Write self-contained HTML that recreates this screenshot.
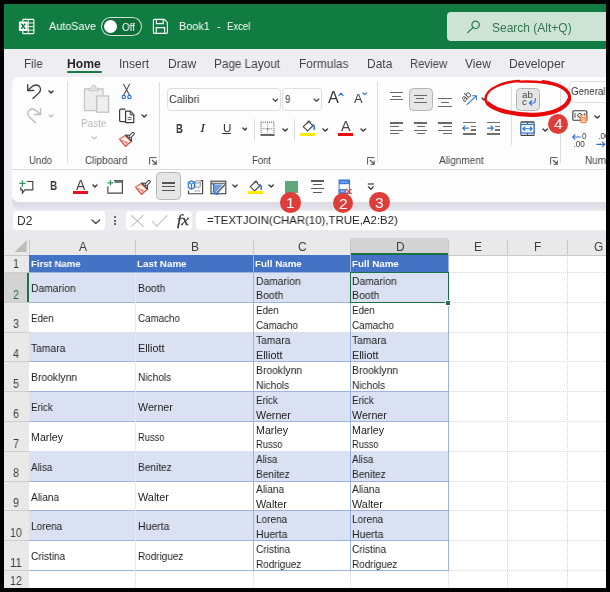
<!DOCTYPE html><html><head><meta charset="utf-8"><title>Excel</title><style>

html,body{margin:0;padding:0;}
body{width:610px;height:592px;overflow:hidden;background:#000;position:relative;font-family:"Liberation Sans",sans-serif;}
#w{position:absolute;left:4px;top:4px;width:601.5px;height:583.5px;overflow:hidden;background:#fff;}
#w div,#w span,#w svg{position:absolute;}
.t{white-space:nowrap;line-height:1;transform-origin:0 50%;display:block;will-change:transform;}

</style></head><body><div id="w">
<div style="left:0.00px;top:0.00px;width:602.00px;height:45.20px;background:#107c41;"></div>
<div style="left:0.00px;top:45.00px;width:602.00px;height:30.00px;background:#eeeef2;"></div>
<div style="left:0.00px;top:73.00px;width:602.00px;height:126.00px;background:#eeeef2;"></div>
<div style="left:0.00px;top:198.00px;width:602.00px;height:36.00px;background:#ebebf0;"></div>
<div style="left:7.50px;top:195.00px;width:595.00px;height:11.20px;background:transparent;background-image:linear-gradient(to bottom,#dadbe3 0,#dddee6 60%,#e2e3e9 85%,#e9e9ee 100%);border-radius:0 0 0 9px;"></div>
<div style="left:0.00px;top:226.50px;width:602.00px;height:7.00px;background:#e7e7ec;"></div>
<div style="left:0.00px;top:233.50px;width:602.00px;height:351.00px;background:#fff;"></div>
<div style="left:8.00px;top:73.30px;width:594.00px;height:125.00px;background:#fdfdfd;border-radius:7px 0 0 7px;"></div>
<div style="left:8.00px;top:165.00px;width:594.00px;height:1.00px;background:#dcdcdc;"></div>
<span class="t" style="left:44.70px;top:17.30px;font-size:11.1px;color:#fff;transform:scaleX(0.9749);">AutoSave</span>
<div style="left:97px;top:12.9px;width:38.7px;height:17.2px;border:1px solid rgba(255,255,255,0.8);border-radius:9.7px;background:#0e6e3a;"></div>
<div style="left:100.3px;top:15.9px;width:12.9px;height:12.9px;border-radius:50%;background:#fff;"></div>
<span class="t" style="left:118.20px;top:17.63px;font-size:10.6px;color:#fff;transform:scaleX(0.9327);">Off</span>
<span class="t" style="left:174.60px;top:17.30px;font-size:11.1px;color:#fff;transform:scaleX(0.9787);">Book1</span>
<span class="t" style="left:212.70px;top:17.30px;font-size:11.1px;color:#fff;transform:scaleX(0.8911);">-</span>
<span class="t" style="left:222.80px;top:17.30px;font-size:11.1px;color:#fff;transform:scaleX(0.8585);">Excel</span>
<div style="left:443.00px;top:7.80px;width:160.00px;height:29.40px;background:#cde3d5;border-radius:4px 0 0 4px;"></div>
<span class="t" style="left:488.00px;top:17.84px;font-size:12px;color:#33774f;">Search (Alt+Q)</span>
<span class="t" style="left:20.10px;top:53.54px;font-size:12px;color:#444;transform:scaleX(0.9667);">File</span>
<span class="t" style="left:114.80px;top:53.54px;font-size:12px;color:#444;">Insert</span>
<span class="t" style="left:163.70px;top:53.54px;font-size:12px;color:#444;transform:scaleX(1.0066);">Draw</span>
<span class="t" style="left:209.90px;top:53.54px;font-size:12px;color:#444;transform:scaleX(0.9794);">Page Layout</span>
<span class="t" style="left:295.20px;top:53.54px;font-size:12px;color:#444;transform:scaleX(0.9897);">Formulas</span>
<span class="t" style="left:362.70px;top:53.54px;font-size:12px;color:#444;">Data</span>
<span class="t" style="left:406.00px;top:53.54px;font-size:12px;color:#444;transform:scaleX(0.9426);">Review</span>
<span class="t" style="left:461.10px;top:53.54px;font-size:12px;color:#444;">View</span>
<span class="t" style="left:505.30px;top:53.54px;font-size:12px;color:#444;transform:scaleX(1.0201);">Developer</span>
<span class="t" style="left:62.90px;top:53.54px;font-size:12px;color:#262626;font-weight:700;transform:scaleX(1.0137);">Home</span>
<div style="left:62.90px;top:67.00px;width:34.70px;height:2.40px;background:#1a7a45;border-radius:1.2px;"></div>
<span class="t" style="left:25.40px;top:151.11px;font-size:10.5px;color:#444;transform:scaleX(0.9200);">Undo</span>
<span class="t" style="left:81.00px;top:151.11px;font-size:10.5px;color:#444;transform:scaleX(0.9454);">Clipboard</span>
<span class="t" style="left:247.80px;top:151.11px;font-size:10.5px;color:#444;transform:scaleX(0.8993);">Font</span>
<span class="t" style="left:435.00px;top:151.11px;font-size:10.5px;color:#444;transform:scaleX(0.9593);">Alignment</span>
<span class="t" style="left:581.20px;top:151.11px;font-size:10.5px;color:#444;transform:scaleX(0.9471);">Num</span>
<div style="left:63.00px;top:78.00px;width:1.00px;height:81.00px;background:#dcdce2;"></div>
<div style="left:155.10px;top:78.00px;width:1.00px;height:81.00px;background:#dcdce2;"></div>
<div style="left:373.10px;top:78.00px;width:1.00px;height:81.00px;background:#dcdce2;"></div>
<div style="left:555.70px;top:78.00px;width:1.00px;height:81.00px;background:#dcdce2;"></div>
<div style="left:9.10px;top:206.80px;width:91.80px;height:19.70px;background:#fff;border-radius:4px;"></div>
<span class="t" style="left:12.60px;top:210.64px;font-size:12px;color:#333;">D2</span>
<div style="left:121.60px;top:206.80px;width:66.90px;height:19.70px;background:#fff;border-radius:4px;"></div>
<div style="left:192.00px;top:206.80px;width:412.00px;height:19.70px;background:#fff;border-radius:4px 0 0 4px;"></div>
<span class="t" style="left:203.20px;top:210.87px;font-size:11.5px;color:#222;transform:scaleX(0.9936);">=TEXTJOIN(CHAR(10),TRUE,A2:B2)</span>
<span class="t" style="left:172.60px;top:208.08px;font-size:15.5px;color:#333;font-family:'Liberation Serif',serif;font-style:italic;-webkit-text-stroke:0.28px #333;transform:scaleX(1.0726);">fx</span>
<div style="left:0.00px;top:233.50px;width:602.00px;height:17.50px;background:#e9e9e9;"></div>
<div style="left:0.00px;top:233.50px;width:25.00px;height:351.00px;background:#e9e9e9;"></div>
<div style="left:346.30px;top:233.50px;width:98.20px;height:17.50px;background:#d3d3d3;"></div>
<div style="left:346.30px;top:249.20px;width:98.20px;height:1.80px;background:#1e7145;"></div>
<div style="left:0.00px;top:268.50px;width:25.00px;height:29.80px;background:#d3d3d3;"></div>
<div style="left:23.40px;top:268.50px;width:1.80px;height:29.80px;background:#1e7145;"></div>
<div style="left:24.50px;top:236.00px;width:1.00px;height:15.00px;background:#c8c8c8;"></div>
<div style="left:131.10px;top:236.00px;width:1.00px;height:15.00px;background:#c8c8c8;"></div>
<div style="left:249.10px;top:236.00px;width:1.00px;height:15.00px;background:#c8c8c8;"></div>
<div style="left:345.80px;top:236.00px;width:1.00px;height:15.00px;background:#c8c8c8;"></div>
<div style="left:444.00px;top:236.00px;width:1.00px;height:15.00px;background:#c8c8c8;"></div>
<div style="left:503.00px;top:236.00px;width:1.00px;height:15.00px;background:#c8c8c8;"></div>
<div style="left:562.90px;top:236.00px;width:1.00px;height:15.00px;background:#c8c8c8;"></div>
<div style="left:0.00px;top:250.60px;width:602.00px;height:0.90px;background:#c9c9c9;"></div>
<div style="left:0.00px;top:268.00px;width:25.00px;height:1.00px;background:#cfcfcf;"></div>
<div style="left:0.00px;top:297.80px;width:25.00px;height:1.00px;background:#cfcfcf;"></div>
<div style="left:0.00px;top:327.60px;width:25.00px;height:1.00px;background:#cfcfcf;"></div>
<div style="left:0.00px;top:357.40px;width:25.00px;height:1.00px;background:#cfcfcf;"></div>
<div style="left:0.00px;top:387.20px;width:25.00px;height:1.00px;background:#cfcfcf;"></div>
<div style="left:0.00px;top:417.00px;width:25.00px;height:1.00px;background:#cfcfcf;"></div>
<div style="left:0.00px;top:446.80px;width:25.00px;height:1.00px;background:#cfcfcf;"></div>
<div style="left:0.00px;top:476.60px;width:25.00px;height:1.00px;background:#cfcfcf;"></div>
<div style="left:0.00px;top:506.40px;width:25.00px;height:1.00px;background:#cfcfcf;"></div>
<div style="left:0.00px;top:536.20px;width:25.00px;height:1.00px;background:#cfcfcf;"></div>
<div style="left:0.00px;top:566.00px;width:25.00px;height:1.00px;background:#cfcfcf;"></div>
<svg style="left:10.00px;top:236.00px;" width="13" height="12.5" viewBox="0 0 13 12.5"><path d="M12.6 0.3 L12.6 12 L0.4 12 Z" fill="#bdbdbd"/></svg>
<span class="t" style="left:74.50px;top:237.44px;font-size:12px;color:#3f3f3f;">A</span>
<span class="t" style="left:186.80px;top:237.44px;font-size:12px;color:#3f3f3f;">B</span>
<span class="t" style="left:294.15px;top:237.44px;font-size:12px;color:#3f3f3f;">C</span>
<span class="t" style="left:391.60px;top:237.44px;font-size:12px;color:#2c4a39;">D</span>
<span class="t" style="left:470.20px;top:237.44px;font-size:12px;color:#3f3f3f;">E</span>
<span class="t" style="left:529.65px;top:237.44px;font-size:12px;color:#3f3f3f;">F</span>
<span class="t" style="left:589.70px;top:237.44px;font-size:12px;color:#3f3f3f;">G</span>
<div style="left:444.00px;top:251.00px;width:1.00px;height:333.00px;background:transparent;background-image:repeating-linear-gradient(to bottom,#d6d6de 0 1px,transparent 1px 2px);"></div>
<div style="left:503.00px;top:251.00px;width:1.00px;height:333.00px;background:transparent;background-image:repeating-linear-gradient(to bottom,#d6d6de 0 1px,transparent 1px 2px);"></div>
<div style="left:562.90px;top:251.00px;width:1.00px;height:333.00px;background:transparent;background-image:repeating-linear-gradient(to bottom,#d6d6de 0 1px,transparent 1px 2px);"></div>
<div style="left:444.50px;top:268.00px;width:158.00px;height:1.00px;background:transparent;background-image:repeating-linear-gradient(to right,#d6d6de 0 1px,transparent 1px 2px);"></div>
<div style="left:444.50px;top:297.80px;width:158.00px;height:1.00px;background:transparent;background-image:repeating-linear-gradient(to right,#d6d6de 0 1px,transparent 1px 2px);"></div>
<div style="left:444.50px;top:327.60px;width:158.00px;height:1.00px;background:transparent;background-image:repeating-linear-gradient(to right,#d6d6de 0 1px,transparent 1px 2px);"></div>
<div style="left:444.50px;top:357.40px;width:158.00px;height:1.00px;background:transparent;background-image:repeating-linear-gradient(to right,#d6d6de 0 1px,transparent 1px 2px);"></div>
<div style="left:444.50px;top:387.20px;width:158.00px;height:1.00px;background:transparent;background-image:repeating-linear-gradient(to right,#d6d6de 0 1px,transparent 1px 2px);"></div>
<div style="left:444.50px;top:417.00px;width:158.00px;height:1.00px;background:transparent;background-image:repeating-linear-gradient(to right,#d6d6de 0 1px,transparent 1px 2px);"></div>
<div style="left:444.50px;top:446.80px;width:158.00px;height:1.00px;background:transparent;background-image:repeating-linear-gradient(to right,#d6d6de 0 1px,transparent 1px 2px);"></div>
<div style="left:444.50px;top:476.60px;width:158.00px;height:1.00px;background:transparent;background-image:repeating-linear-gradient(to right,#d6d6de 0 1px,transparent 1px 2px);"></div>
<div style="left:444.50px;top:506.40px;width:158.00px;height:1.00px;background:transparent;background-image:repeating-linear-gradient(to right,#d6d6de 0 1px,transparent 1px 2px);"></div>
<div style="left:444.50px;top:536.20px;width:158.00px;height:1.00px;background:transparent;background-image:repeating-linear-gradient(to right,#d6d6de 0 1px,transparent 1px 2px);"></div>
<div style="left:444.50px;top:566.00px;width:158.00px;height:1.00px;background:transparent;background-image:repeating-linear-gradient(to right,#d6d6de 0 1px,transparent 1px 2px);"></div>
<div style="left:25.00px;top:566.50px;width:420.00px;height:0.00px;background:#e2e2e2;"></div>
<div style="left:131.10px;top:566.50px;width:1.00px;height:20.00px;background:transparent;background-image:repeating-linear-gradient(to bottom,#d6d6de 0 1px,transparent 1px 2px);"></div>
<div style="left:249.10px;top:566.50px;width:1.00px;height:20.00px;background:transparent;background-image:repeating-linear-gradient(to bottom,#d6d6de 0 1px,transparent 1px 2px);"></div>
<div style="left:345.80px;top:566.50px;width:1.00px;height:20.00px;background:transparent;background-image:repeating-linear-gradient(to bottom,#d6d6de 0 1px,transparent 1px 2px);"></div>
<div style="left:25.00px;top:251.00px;width:419.50px;height:17.50px;background:#4472c4;"></div>
<div style="left:25.00px;top:268.50px;width:419.50px;height:29.80px;background:#d9e1f2;"></div>
<div style="left:25.00px;top:297.80px;width:419.50px;height:1.00px;background:#9db4e0;"></div>
<div style="left:25.00px;top:327.60px;width:419.50px;height:1.00px;background:#9db4e0;"></div>
<div style="left:25.00px;top:328.10px;width:419.50px;height:29.80px;background:#d9e1f2;"></div>
<div style="left:25.00px;top:357.40px;width:419.50px;height:1.00px;background:#9db4e0;"></div>
<div style="left:25.00px;top:387.20px;width:419.50px;height:1.00px;background:#9db4e0;"></div>
<div style="left:25.00px;top:387.70px;width:419.50px;height:29.80px;background:#d9e1f2;"></div>
<div style="left:25.00px;top:417.00px;width:419.50px;height:1.00px;background:#9db4e0;"></div>
<div style="left:25.00px;top:446.80px;width:419.50px;height:1.00px;background:#9db4e0;"></div>
<div style="left:25.00px;top:447.30px;width:419.50px;height:29.80px;background:#d9e1f2;"></div>
<div style="left:25.00px;top:476.60px;width:419.50px;height:1.00px;background:#9db4e0;"></div>
<div style="left:25.00px;top:506.40px;width:419.50px;height:1.00px;background:#9db4e0;"></div>
<div style="left:25.00px;top:506.90px;width:419.50px;height:29.80px;background:#d9e1f2;"></div>
<div style="left:25.00px;top:536.20px;width:419.50px;height:1.00px;background:#9db4e0;"></div>
<div style="left:25.00px;top:566.00px;width:419.50px;height:1.00px;background:#9db4e0;"></div>
<div style="left:25.00px;top:268.00px;width:419.50px;height:1.00px;background:#9db4e0;"></div>
<div style="left:249.10px;top:251.00px;width:1.00px;height:315.50px;background:#9db4e0;"></div>
<div style="left:345.80px;top:251.00px;width:1.00px;height:315.50px;background:#9db4e0;"></div>
<div style="left:443.80px;top:251.00px;width:1.00px;height:315.50px;background:#9db4e0;"></div>
<div style="left:131.10px;top:268.50px;width:1.00px;height:298.00px;background:#e6e9f2;"></div>
<span class="t" style="left:9.00px;top:254.14px;font-size:12px;color:#3f3f3f;transform:scaleX(0.8972);">1</span>
<span class="t" style="left:9.00px;top:284.64px;font-size:12px;color:#1e7145;transform:scaleX(0.8972);">2</span>
<span class="t" style="left:9.00px;top:314.44px;font-size:12px;color:#3f3f3f;transform:scaleX(0.8972);">3</span>
<span class="t" style="left:9.00px;top:344.24px;font-size:12px;color:#3f3f3f;transform:scaleX(0.8972);">4</span>
<span class="t" style="left:9.00px;top:374.04px;font-size:12px;color:#3f3f3f;transform:scaleX(0.8972);">5</span>
<span class="t" style="left:9.00px;top:403.84px;font-size:12px;color:#3f3f3f;transform:scaleX(0.8972);">6</span>
<span class="t" style="left:9.00px;top:433.64px;font-size:12px;color:#3f3f3f;transform:scaleX(0.8972);">7</span>
<span class="t" style="left:9.00px;top:463.44px;font-size:12px;color:#3f3f3f;transform:scaleX(0.8972);">8</span>
<span class="t" style="left:9.00px;top:493.24px;font-size:12px;color:#3f3f3f;transform:scaleX(0.8972);">9</span>
<span class="t" style="left:6.10px;top:523.04px;font-size:12px;color:#3f3f3f;transform:scaleX(0.8833);">10</span>
<span class="t" style="left:6.10px;top:552.84px;font-size:12px;color:#3f3f3f;transform:scaleX(0.9464);">11</span>
<span class="t" style="left:6.10px;top:570.84px;font-size:12px;color:#3f3f3f;transform:scaleX(0.8833);">12</span>
<span class="t" style="left:26.80px;top:255.10px;font-size:9.8px;color:#fff;font-weight:700;transform:scaleX(0.9795);">First Name</span>
<span class="t" style="left:133.20px;top:255.10px;font-size:9.8px;color:#fff;font-weight:700;">Last Name</span>
<span class="t" style="left:251.20px;top:255.10px;font-size:9.8px;color:#fff;font-weight:700;">Full Name</span>
<span class="t" style="left:347.90px;top:255.10px;font-size:9.8px;color:#fff;font-weight:700;">Full Name</span>
<span class="t" style="left:27.20px;top:278.94px;font-size:10.7px;color:#222;transform:scaleX(0.9629);">Damarion</span>
<span class="t" style="left:133.50px;top:278.94px;font-size:10.7px;color:#222;transform:scaleX(0.9810);">Booth</span>
<span class="t" style="left:251.70px;top:271.54px;font-size:10.7px;color:#222;transform:scaleX(0.9629);">Damarion</span>
<span class="t" style="left:251.70px;top:286.34px;font-size:10.7px;color:#222;transform:scaleX(0.9810);">Booth</span>
<span class="t" style="left:348.30px;top:271.54px;font-size:10.7px;color:#222;transform:scaleX(0.9629);">Damarion</span>
<span class="t" style="left:348.30px;top:286.34px;font-size:10.7px;color:#222;transform:scaleX(0.9810);">Booth</span>
<span class="t" style="left:27.20px;top:308.74px;font-size:10.7px;color:#222;transform:scaleX(0.9092);">Eden</span>
<span class="t" style="left:133.50px;top:308.74px;font-size:10.7px;color:#222;transform:scaleX(0.9176);">Camacho</span>
<span class="t" style="left:251.70px;top:301.34px;font-size:10.7px;color:#222;transform:scaleX(0.9092);">Eden</span>
<span class="t" style="left:251.70px;top:316.14px;font-size:10.7px;color:#222;transform:scaleX(0.9176);">Camacho</span>
<span class="t" style="left:348.30px;top:301.34px;font-size:10.7px;color:#222;transform:scaleX(0.9092);">Eden</span>
<span class="t" style="left:348.30px;top:316.14px;font-size:10.7px;color:#222;transform:scaleX(0.9176);">Camacho</span>
<span class="t" style="left:27.20px;top:338.54px;font-size:10.7px;color:#222;transform:scaleX(0.9611);">Tamara</span>
<span class="t" style="left:133.50px;top:338.54px;font-size:10.7px;color:#222;transform:scaleX(1.0118);">Elliott</span>
<span class="t" style="left:251.70px;top:331.14px;font-size:10.7px;color:#222;transform:scaleX(0.9611);">Tamara</span>
<span class="t" style="left:251.70px;top:345.94px;font-size:10.7px;color:#222;transform:scaleX(1.0118);">Elliott</span>
<span class="t" style="left:348.30px;top:331.14px;font-size:10.7px;color:#222;transform:scaleX(0.9611);">Tamara</span>
<span class="t" style="left:348.30px;top:345.94px;font-size:10.7px;color:#222;transform:scaleX(1.0118);">Elliott</span>
<span class="t" style="left:27.20px;top:368.34px;font-size:10.7px;color:#222;transform:scaleX(0.9698);">Brooklynn</span>
<span class="t" style="left:133.50px;top:368.34px;font-size:10.7px;color:#222;transform:scaleX(0.9449);">Nichols</span>
<span class="t" style="left:251.70px;top:360.94px;font-size:10.7px;color:#222;transform:scaleX(0.9698);">Brooklynn</span>
<span class="t" style="left:251.70px;top:375.74px;font-size:10.7px;color:#222;transform:scaleX(0.9449);">Nichols</span>
<span class="t" style="left:348.30px;top:360.94px;font-size:10.7px;color:#222;transform:scaleX(0.9698);">Brooklynn</span>
<span class="t" style="left:348.30px;top:375.74px;font-size:10.7px;color:#222;transform:scaleX(0.9449);">Nichols</span>
<span class="t" style="left:27.20px;top:398.14px;font-size:10.7px;color:#222;transform:scaleX(0.9127);">Erick</span>
<span class="t" style="left:133.50px;top:398.14px;font-size:10.7px;color:#222;transform:scaleX(0.9949);">Werner</span>
<span class="t" style="left:251.70px;top:390.74px;font-size:10.7px;color:#222;transform:scaleX(0.9127);">Erick</span>
<span class="t" style="left:251.70px;top:405.54px;font-size:10.7px;color:#222;transform:scaleX(0.9949);">Werner</span>
<span class="t" style="left:348.30px;top:390.74px;font-size:10.7px;color:#222;transform:scaleX(0.9127);">Erick</span>
<span class="t" style="left:348.30px;top:405.54px;font-size:10.7px;color:#222;transform:scaleX(0.9949);">Werner</span>
<span class="t" style="left:27.20px;top:427.94px;font-size:10.7px;color:#222;transform:scaleX(0.9951);">Marley</span>
<span class="t" style="left:133.50px;top:427.94px;font-size:10.7px;color:#222;transform:scaleX(0.8748);">Russo</span>
<span class="t" style="left:251.70px;top:420.54px;font-size:10.7px;color:#222;transform:scaleX(0.9951);">Marley</span>
<span class="t" style="left:251.70px;top:435.34px;font-size:10.7px;color:#222;transform:scaleX(0.8748);">Russo</span>
<span class="t" style="left:348.30px;top:420.54px;font-size:10.7px;color:#222;transform:scaleX(0.9951);">Marley</span>
<span class="t" style="left:348.30px;top:435.34px;font-size:10.7px;color:#222;transform:scaleX(0.8748);">Russo</span>
<span class="t" style="left:27.20px;top:457.74px;font-size:10.7px;color:#222;transform:scaleX(0.9176);">Alisa</span>
<span class="t" style="left:133.50px;top:457.74px;font-size:10.7px;color:#222;transform:scaleX(0.9456);">Benitez</span>
<span class="t" style="left:251.70px;top:450.34px;font-size:10.7px;color:#222;transform:scaleX(0.9176);">Alisa</span>
<span class="t" style="left:251.70px;top:465.14px;font-size:10.7px;color:#222;transform:scaleX(0.9456);">Benitez</span>
<span class="t" style="left:348.30px;top:450.34px;font-size:10.7px;color:#222;transform:scaleX(0.9176);">Alisa</span>
<span class="t" style="left:348.30px;top:465.14px;font-size:10.7px;color:#222;transform:scaleX(0.9456);">Benitez</span>
<span class="t" style="left:27.20px;top:487.54px;font-size:10.7px;color:#222;transform:scaleX(0.9455);">Aliana</span>
<span class="t" style="left:133.50px;top:487.54px;font-size:10.7px;color:#222;transform:scaleX(1.0168);">Walter</span>
<span class="t" style="left:251.70px;top:480.14px;font-size:10.7px;color:#222;transform:scaleX(0.9455);">Aliana</span>
<span class="t" style="left:251.70px;top:494.94px;font-size:10.7px;color:#222;transform:scaleX(1.0168);">Walter</span>
<span class="t" style="left:348.30px;top:480.14px;font-size:10.7px;color:#222;transform:scaleX(0.9455);">Aliana</span>
<span class="t" style="left:348.30px;top:494.94px;font-size:10.7px;color:#222;transform:scaleX(1.0168);">Walter</span>
<span class="t" style="left:27.20px;top:517.34px;font-size:10.7px;color:#222;transform:scaleX(0.9374);">Lorena</span>
<span class="t" style="left:133.50px;top:517.34px;font-size:10.7px;color:#222;transform:scaleX(0.9759);">Huerta</span>
<span class="t" style="left:251.70px;top:509.94px;font-size:10.7px;color:#222;transform:scaleX(0.9374);">Lorena</span>
<span class="t" style="left:251.70px;top:524.74px;font-size:10.7px;color:#222;transform:scaleX(0.9759);">Huerta</span>
<span class="t" style="left:348.30px;top:509.94px;font-size:10.7px;color:#222;transform:scaleX(0.9374);">Lorena</span>
<span class="t" style="left:348.30px;top:524.74px;font-size:10.7px;color:#222;transform:scaleX(0.9759);">Huerta</span>
<span class="t" style="left:27.20px;top:547.14px;font-size:10.7px;color:#222;transform:scaleX(0.9447);">Cristina</span>
<span class="t" style="left:133.50px;top:547.14px;font-size:10.7px;color:#222;transform:scaleX(0.9296);">Rodriguez</span>
<span class="t" style="left:251.70px;top:539.74px;font-size:10.7px;color:#222;transform:scaleX(0.9447);">Cristina</span>
<span class="t" style="left:251.70px;top:554.54px;font-size:10.7px;color:#222;transform:scaleX(0.9296);">Rodriguez</span>
<span class="t" style="left:348.30px;top:539.74px;font-size:10.7px;color:#222;transform:scaleX(0.9447);">Cristina</span>
<span class="t" style="left:348.30px;top:554.54px;font-size:10.7px;color:#222;transform:scaleX(0.9296);">Rodriguez</span>
<div style="left:345.6px;top:268.0px;width:97.2px;height:28.9px;border:1.8px solid #1e7145;"></div>
<div style="left:441.30px;top:295.80px;width:4.00px;height:4.00px;background:#1e7145;border:1px solid #fff;"></div>
<svg style="left:14.00px;top:14.00px;" width="18" height="17" viewBox="0 0 18 17"><rect x="4.7" y="1.4" width="11.2" height="14.2" rx="0.8" fill="none" stroke="#fff" stroke-width="1.1"/>
<path d="M4.8 5H15.8M4.8 8.6H15.8M4.8 12.2H15.8M10.3 1.5V15.5" stroke="#fff" stroke-width="0.9" fill="none"/>
<rect x="0.9" y="3.4" width="8.7" height="9.6" rx="0.7" fill="#fff"/>
<path d="M3.3 5.6 L7.2 10.9 M7.2 5.6 L3.3 10.9" stroke="#107c41" stroke-width="1.5" fill="none"/></svg>
<svg style="left:148.00px;top:14.40px;" width="17" height="17" viewBox="0 0 17 17"><path d="M1.4 2.4 Q1.4 1.3 2.5 1.3 H12.2 L15.4 4.4 V14.2 Q15.4 15.3 14.3 15.3 H2.5 Q1.4 15.3 1.4 14.2 Z" fill="none" stroke="#fff" stroke-width="1.15"/>
<path d="M4.4 1.5 V5.6 H11.2 V1.5" fill="none" stroke="#fff" stroke-width="1.1"/>
<path d="M4.2 15.2 V9.6 H12.6 V15.2" fill="none" stroke="#fff" stroke-width="1.1"/></svg>
<svg style="left:461.50px;top:15.50px;" width="15" height="14" viewBox="0 0 15 14"><circle cx="9.6" cy="4.8" r="3.7" fill="none" stroke="#33774f" stroke-width="1.2"/><path d="M6.9 7.6 L1.6 12.6" stroke="#33774f" stroke-width="1.3" stroke-linecap="round"/></svg>
<svg style="left:22.00px;top:79.00px;" width="17" height="17" viewBox="0 0 17 17"><path d="M1.7 1.6 V7.5 H7.7" fill="none" stroke="#444" stroke-width="1.35" stroke-linecap="round" stroke-linejoin="round"/>
<path d="M2 7.2 L5.6 3.9 C8.3 1.4 12.2 1.4 13.8 4 C15.3 6.4 14.2 8.6 12.6 10.2 L6.9 15.6" fill="none" stroke="#444" stroke-width="1.35" stroke-linecap="round" stroke-linejoin="round"/></svg>
<svg style="left:22.00px;top:103.00px;" width="17" height="17" viewBox="0 0 17 17"><path d="M14.5 1.6 V7.5 H8.5" fill="none" stroke="#bdbdbd" stroke-width="1.4" stroke-linecap="round" stroke-linejoin="round"/>
<path d="M14.2 7.2 L10.6 3.9 C7.9 1.4 4 1.4 2.4 4 C0.9 6.4 2 8.6 3.6 10.2 L9.3 15.6" fill="none" stroke="#bdbdbd" stroke-width="1.4" stroke-linecap="round" stroke-linejoin="round"/></svg>
<svg style="left:44.45px;top:85.90px;" width="6.1000000000000085" height="3.9000000000000057" viewBox="0 0 6.1000000000000085 3.9000000000000057"><path d="M1 1 L3.05 2.90 L5.10 1" fill="none" stroke="#3a3a3a" stroke-width="1.45" stroke-linecap="round" stroke-linejoin="round"/></svg>
<svg style="left:44.45px;top:110.20px;" width="6.1000000000000085" height="3.799999999999997" viewBox="0 0 6.1000000000000085 3.799999999999997"><path d="M1 1 L3.05 2.80 L5.10 1" fill="none" stroke="#bdbdbd" stroke-width="1.2" stroke-linecap="round" stroke-linejoin="round"/></svg>
<svg style="left:79.00px;top:80.00px;" width="27" height="30" viewBox="0 0 27 30"><path d="M1.5 5 H20 V26.6 H1.5 Z" fill="#ededed" stroke="#c6c6c6" stroke-width="1.3"/>
<path d="M6.2 6.8 V4.2 H8.6 Q8.8 1.2 10.8 1.2 Q12.8 1.2 13 4.2 H15.4 V6.8 Z" fill="#e6e6e6" stroke="#c6c6c6" stroke-width="1.1"/>
<rect x="13.6" y="12" width="12" height="16.2" fill="#efefef" stroke="#c2c2c2" stroke-width="1.3"/></svg>
<span class="t" style="left:77.20px;top:114.29px;font-size:11px;color:#bcbcbc;transform:scaleX(0.9026);">Paste</span>
<svg style="left:86.75px;top:131.90px;" width="6.400000000000006" height="3.8999999999999773" viewBox="0 0 6.400000000000006 3.8999999999999773"><path d="M1 1 L3.20 2.90 L5.40 1" fill="none" stroke="#bdbdbd" stroke-width="1.2" stroke-linecap="round" stroke-linejoin="round"/></svg>
<svg style="left:116.00px;top:79.00px;" width="14" height="17" viewBox="0 0 14 17"><path d="M3.6 1.2 L9.6 12.2 M9.6 1.2 L3.6 12.2" stroke="#4a4a4a" stroke-width="1.05" fill="none" stroke-linecap="round"/>
<circle cx="3.8" cy="14" r="1.7" fill="none" stroke="#2f74d0" stroke-width="1.2"/><circle cx="9.4" cy="14" r="1.7" fill="none" stroke="#2f74d0" stroke-width="1.2"/></svg>
<svg style="left:114.00px;top:103.00px;" width="18" height="17" viewBox="0 0 18 17"><path d="M7.4 2.2 H3 Q1.6 2.2 1.6 3.6 V13.2 Q1.6 14.6 3 14.6 H7" fill="none" stroke="#3a3a3a" stroke-width="1.2"/>
<path d="M7.6 4.2 H12.4 L15.8 7.6 V15.6 H7.6 Z" fill="#fff" stroke="#3a3a3a" stroke-width="1.2" stroke-linejoin="round"/>
<path d="M12.2 4.4 V7.8 H15.6" fill="none" stroke="#3a3a3a" stroke-width="1"/>
<path d="M9.6 10.4 H13.6 M9.6 12.6 H13.6" stroke="#555" stroke-width="0.9"/></svg>
<svg style="left:136.95px;top:110.30px;" width="6.399999999999977" height="4.0" viewBox="0 0 6.399999999999977 4.0"><path d="M1 1 L3.20 3.00 L5.40 1" fill="none" stroke="#3a3a3a" stroke-width="1.45" stroke-linecap="round" stroke-linejoin="round"/></svg>
<svg style="left:114.00px;top:128.00px;" width="18" height="16" viewBox="0 0 18 16"><path d="M7.2 3.6 L1.4 7.2 L7.6 14.4 L13.2 9.4 Z" fill="#fdf1ea" stroke="#e8352e" stroke-width="1.15" stroke-linejoin="round"/>
<path d="M7.4 3.4 L1.4 7.2" stroke="#dfa06e" stroke-width="1.2" stroke-linecap="round"/>
<path d="M3.6 9 L5.6 8.6 L7 10.4 L9.2 10 L8.4 12.4" fill="none" stroke="#e8352e" stroke-width="0.9" opacity="0.85"/>
<path d="M7.6 3 L11.2 3.2 L12.6 4.4 L13.4 6 L13.7 9.2 Z" fill="#fff" stroke="#444" stroke-width="1.1" stroke-linejoin="round"/>
<path d="M12.5 4.4 L15.1 1.5" stroke="#444" stroke-width="3.5" stroke-linecap="round"/>
<path d="M12.4 4.5 L15.1 1.5" stroke="#fff" stroke-width="1.3" stroke-linecap="round"/></svg>
<svg style="left:145.00px;top:153.00px;" width="8" height="8" viewBox="0 0 8 8"><path d="M0.6 7.4 V0.6 H7.4" fill="none" stroke="#555" stroke-width="1"/><path d="M3 3 L7 7 M7.2 3.6 V7.2 H3.6" fill="none" stroke="#555" stroke-width="1.1"/></svg>
<div style="left:163.3px;top:84.3px;width:112.2px;height:20.7px;border:1px solid #dedede;border-radius:4px;background:#fff;"></div>
<div style="left:278.2px;top:84.3px;width:38px;height:20.7px;border:1px solid #dedede;border-radius:4px;background:#fff;"></div>
<span class="t" style="left:165.30px;top:90.03px;font-size:11.3px;color:#333;transform:scaleX(0.9495);">Calibri</span>
<span class="t" style="left:280.80px;top:89.93px;font-size:11.3px;color:#333;transform:scaleX(0.8576);">9</span>
<svg style="left:267.55px;top:93.60px;" width="6.7999999999999545" height="4.400000000000006" viewBox="0 0 6.7999999999999545 4.400000000000006"><path d="M1 1 L3.40 3.40 L5.80 1" fill="none" stroke="#444" stroke-width="1.2" stroke-linecap="round" stroke-linejoin="round"/></svg>
<svg style="left:309.15px;top:93.60px;" width="6.7999999999999545" height="4.400000000000006" viewBox="0 0 6.7999999999999545 4.400000000000006"><path d="M1 1 L3.40 3.40 L5.80 1" fill="none" stroke="#444" stroke-width="1.2" stroke-linecap="round" stroke-linejoin="round"/></svg>
<span class="t" style="left:324.20px;top:85.96px;font-size:16px;color:#3a3a3a;transform:scaleX(1.0120);">A</span>
<svg style="left:333.60px;top:88.40px;" width="6.2" height="4.8" viewBox="0 0 6.2 4.8"><path d="M1 3.6 L3.05 1.2 L5.1 3.6" fill="none" stroke="#2f74d0" stroke-width="1.2" stroke-linecap="round" stroke-linejoin="round"/></svg>
<span class="t" style="left:350.30px;top:88.66px;font-size:12.8px;color:#3a3a3a;transform:scaleX(0.9828);">A</span>
<svg style="left:357.75px;top:88.20px;" width="5.300000000000011" height="3.6999999999999886" viewBox="0 0 5.300000000000011 3.6999999999999886"><path d="M1 1 L2.65 2.70 L4.30 1" fill="none" stroke="#2f74d0" stroke-width="1.2" stroke-linecap="round" stroke-linejoin="round"/></svg>
<span class="t" style="left:171.60px;top:117.50px;font-size:13px;color:#333;font-weight:700;transform:scaleX(0.7241);">B</span>
<span class="t" style="left:196.40px;top:117.17px;font-size:13.5px;color:#333;font-family:'Liberation Serif',serif;font-style:italic;transform:scaleX(1.1556);">I</span>
<span class="t" style="left:218.60px;top:117.78px;font-size:11.6px;color:#333;">U</span>
<div style="left:218.20px;top:129.00px;width:9.00px;height:1.10px;background:#333;"></div>
<svg style="left:237.55px;top:123.00px;" width="5.899999999999977" height="4.0" viewBox="0 0 5.899999999999977 4.0"><path d="M1 1 L2.95 3.00 L4.90 1" fill="none" stroke="#3a3a3a" stroke-width="1.45" stroke-linecap="round" stroke-linejoin="round"/></svg>
<div style="left:250.00px;top:114.50px;width:0.90px;height:21.00px;background:#dcdce2;"></div>
<svg style="left:255.50px;top:116.50px;" width="16" height="16" viewBox="0 0 16 16"><path d="M0.6 1.1 H14.6 M1.1 2.6 V12.6 M14 2.6 V12.6" stroke="#666" stroke-width="1.15" stroke-dasharray="1.05 1.0" fill="none"/>
<path d="M2.6 7.8 H13" stroke="#777" stroke-width="1.1" stroke-dasharray="1.05 1.0" fill="none"/>
<path d="M7.55 2.6 V12.6" stroke="#999" stroke-width="1.1" stroke-dasharray="1.05 1.0" fill="none"/>
<rect x="6.9" y="7" width="1.4" height="1.6" fill="#777"/>
<path d="M0.5 12.2 V14.1 H14.6 V12.2" stroke="#666" stroke-width="0" fill="none"/>
<rect x="0.5" y="12.9" width="14.1" height="2.1" fill="#666"/></svg>
<svg style="left:277.95px;top:123.50px;" width="6.300000000000011" height="4.099999999999994" viewBox="0 0 6.300000000000011 4.099999999999994"><path d="M1 1 L3.15 3.10 L5.30 1" fill="none" stroke="#3a3a3a" stroke-width="1.45" stroke-linecap="round" stroke-linejoin="round"/></svg>
<div style="left:290.00px;top:114.50px;width:0.90px;height:21.00px;background:#dcdce2;"></div>
<svg style="left:297.60px;top:116.40px;" width="14" height="12" viewBox="0 0 14 12"><path d="M6.9 1.5 L10.7 6 L5.6 10.9 L1.2 6.7 Z" fill="#fff" stroke="#444" stroke-width="1.1" stroke-linejoin="round"/>
<path d="M4.9 3.2 Q5.4 0.7 7.3 0.9 Q8.6 1.2 8.3 3.4" fill="none" stroke="#444" stroke-width="0.9"/>
<path d="M10.9 4.6 Q12.9 6 12.1 9.4" fill="none" stroke="#2f74d0" stroke-width="1.5" stroke-linecap="round"/></svg>
<div style="left:296.00px;top:128.70px;width:15.30px;height:3.60px;background:#ffeb0a;"></div>
<svg style="left:318.25px;top:123.50px;" width="6.5" height="4.099999999999994" viewBox="0 0 6.5 4.099999999999994"><path d="M1 1 L3.25 3.10 L5.50 1" fill="none" stroke="#3a3a3a" stroke-width="1.45" stroke-linecap="round" stroke-linejoin="round"/></svg>
<span class="t" style="left:337.40px;top:115.45px;font-size:14px;color:#4a4a4a;transform:scaleX(1.0274);">A</span>
<div style="left:334.10px;top:128.70px;width:14.90px;height:3.60px;background:#ee0a0a;"></div>
<svg style="left:356.15px;top:123.50px;" width="6.499999999999943" height="4.099999999999994" viewBox="0 0 6.499999999999943 4.099999999999994"><path d="M1 1 L3.25 3.10 L5.50 1" fill="none" stroke="#3a3a3a" stroke-width="1.45" stroke-linecap="round" stroke-linejoin="round"/></svg>
<svg style="left:362.90px;top:153.00px;" width="8" height="8" viewBox="0 0 8 8"><path d="M0.6 7.4 V0.6 H7.4" fill="none" stroke="#555" stroke-width="1"/><path d="M3 3 L7 7 M7.2 3.6 V7.2 H3.6" fill="none" stroke="#555" stroke-width="1.1"/></svg>
<div style="left:386.00px;top:88.00px;width:13.20px;height:1.20px;background:#686868;"></div>
<div style="left:388.40px;top:91.60px;width:8.40px;height:1.20px;background:#686868;"></div>
<div style="left:386.00px;top:95.10px;width:13.20px;height:1.20px;background:#686868;"></div>
<div style="left:404.9px;top:83.8px;width:21.9px;height:21.4px;border:1px solid #b4b4b4;border-radius:4.5px;background:#e6e6e6;"></div>
<div style="left:409.70px;top:90.70px;width:13.20px;height:1.20px;background:#686868;"></div>
<div style="left:412.10px;top:94.30px;width:8.40px;height:1.20px;background:#686868;"></div>
<div style="left:409.70px;top:97.80px;width:13.20px;height:1.20px;background:#686868;"></div>
<div style="left:434.40px;top:93.80px;width:13.20px;height:1.20px;background:#686868;"></div>
<div style="left:436.80px;top:97.90px;width:8.40px;height:1.20px;background:#686868;"></div>
<div style="left:434.40px;top:101.60px;width:13.20px;height:1.20px;background:#686868;"></div>
<div style="left:386.00px;top:118.40px;width:13.20px;height:1.20px;background:#686868;"></div>
<div style="left:386.00px;top:121.90px;width:8.60px;height:1.20px;background:#686868;"></div>
<div style="left:386.00px;top:125.50px;width:13.20px;height:1.20px;background:#686868;"></div>
<div style="left:386.00px;top:129.10px;width:8.60px;height:1.20px;background:#686868;"></div>
<div style="left:410.30px;top:118.40px;width:13.20px;height:1.20px;background:#686868;"></div>
<div style="left:412.60px;top:121.90px;width:8.60px;height:1.20px;background:#686868;"></div>
<div style="left:410.30px;top:125.50px;width:13.20px;height:1.20px;background:#686868;"></div>
<div style="left:412.60px;top:129.10px;width:8.60px;height:1.20px;background:#686868;"></div>
<div style="left:434.40px;top:118.40px;width:13.20px;height:1.20px;background:#686868;"></div>
<div style="left:439.00px;top:121.90px;width:8.60px;height:1.20px;background:#686868;"></div>
<div style="left:434.40px;top:125.50px;width:13.20px;height:1.20px;background:#686868;"></div>
<div style="left:439.00px;top:129.10px;width:8.60px;height:1.20px;background:#686868;"></div>
<svg style="left:456.00px;top:85.00px;" width="19" height="18" viewBox="0 0 19 18"><text x="0" y="0" font-family="Liberation Sans" font-size="9.6" fill="#444" transform="translate(4.4 13.6) rotate(-45)">ab</text>
<path d="M7 15.6 L16 7.2 M16.4 10.6 V6.8 H12.6" fill="none" stroke="#2f74d0" stroke-width="1.05" stroke-linecap="round" stroke-linejoin="round"/></svg>
<svg style="left:477.05px;top:92.60px;" width="5.899999999999977" height="4.0" viewBox="0 0 5.899999999999977 4.0"><path d="M1 1 L2.95 3.00 L4.90 1" fill="none" stroke="#3a3a3a" stroke-width="1.45" stroke-linecap="round" stroke-linejoin="round"/></svg>
<div style="left:458.60px;top:117.67px;width:13.30px;height:1.25px;background:#6e6e6e;"></div>
<div style="left:458.60px;top:129.38px;width:13.30px;height:1.25px;background:#6e6e6e;"></div>
<div style="left:466.90px;top:121.58px;width:5.00px;height:1.25px;background:#6e6e6e;"></div>
<div style="left:466.90px;top:125.47px;width:5.00px;height:1.25px;background:#6e6e6e;"></div>
<svg style="left:458.40px;top:121.30px;" width="7.4" height="6.4" viewBox="0 0 7.4 6.4"><path d="M6.4 3.1 H0.9 M2.9 0.9 L0.7 3.1 L2.9 5.3" fill="none" stroke="#2f74d0" stroke-width="1.1" stroke-linecap="round" stroke-linejoin="round"/></svg>
<div style="left:482.70px;top:117.67px;width:13.30px;height:1.25px;background:#6e6e6e;"></div>
<div style="left:482.70px;top:129.38px;width:13.30px;height:1.25px;background:#6e6e6e;"></div>
<div style="left:491.00px;top:121.58px;width:5.00px;height:1.25px;background:#6e6e6e;"></div>
<div style="left:491.00px;top:125.47px;width:5.00px;height:1.25px;background:#6e6e6e;"></div>
<svg style="left:482.50px;top:121.30px;" width="7.4" height="6.4" viewBox="0 0 7.4 6.4"><path d="M0.6 3.1 H6.1 M4.1 0.9 L6.3 3.1 L4.1 5.3" fill="none" stroke="#2f74d0" stroke-width="1.1" stroke-linecap="round" stroke-linejoin="round"/></svg>
<div style="left:506.50px;top:83.00px;width:0.90px;height:58.00px;background:#dcdce2;"></div>
<div style="left:512.4px;top:84.4px;width:21.3px;height:20.7px;border:1px solid #b4b4b4;border-radius:4.5px;background:#e6e6e6;"></div>
<span class="t" style="left:518.00px;top:87.47px;font-size:8.9px;color:#4a4a4a;transform:scaleX(1.1139);">ab</span>
<span class="t" style="left:518.20px;top:94.07px;font-size:8.9px;color:#4a4a4a;transform:scaleX(1.1268);">c</span>
<svg style="left:523.60px;top:94.20px;" width="10" height="9" viewBox="0 0 10 9"><path d="M7.2 0.6 V3.2 Q7.2 5 5.4 5 H1.6 M3.8 2.8 L1.4 5 L3.8 7.2" fill="none" stroke="#2f74d0" stroke-width="1.2" stroke-linecap="round" stroke-linejoin="round"/></svg>
<svg style="left:515.80px;top:116.80px;" width="16" height="16" viewBox="0 0 16 16"><path d="M0.8 1 H14.2 M0.8 14.4 H14.2" stroke="#444" stroke-width="1.3" fill="none"/>
<path d="M0.8 1 V14.4 M14.2 1 V14.4 M7.5 1 V3.4 M7.5 12 V14.4" stroke="#555" stroke-width="0.9" fill="none"/>
<rect x="0.9" y="3.4" width="13.2" height="8.6" fill="#f4f8fe" stroke="#2f6fd0" stroke-width="1.2"/>
<path d="M3 7.7 H12 M4.8 5.9 L2.9 7.7 L4.8 9.5 M10.2 5.9 L12.1 7.7 L10.2 9.5" fill="none" stroke="#2f74d0" stroke-width="1.1" stroke-linecap="round" stroke-linejoin="round"/></svg>
<svg style="left:537.95px;top:123.60px;" width="6.500000000000114" height="4.099999999999966" viewBox="0 0 6.500000000000114 4.099999999999966"><path d="M1 1 L3.25 3.10 L5.50 1" fill="none" stroke="#3a3a3a" stroke-width="1.45" stroke-linecap="round" stroke-linejoin="round"/></svg>
<svg style="left:545.70px;top:153.00px;" width="8" height="8" viewBox="0 0 8 8"><path d="M0.6 7.4 V0.6 H7.4" fill="none" stroke="#555" stroke-width="1"/><path d="M3 3 L7 7 M7.2 3.6 V7.2 H3.6" fill="none" stroke="#555" stroke-width="1.1"/></svg>
<div style="left:564.8px;top:76.8px;width:50px;height:20.6px;border:1px solid #dedede;border-radius:4px;background:#fff;"></div>
<span class="t" style="left:567.10px;top:82.13px;font-size:11.3px;color:#333;transform:scaleX(0.8557);">General</span>
<svg style="left:568.00px;top:106.40px;" width="17" height="14" viewBox="0 0 17 14"><rect x="0.8" y="0.8" width="14" height="9.4" rx="1" fill="none" stroke="#3a3a3a" stroke-width="1.1"/>
<circle cx="7.8" cy="5.5" r="2" fill="none" stroke="#3a3a3a" stroke-width="1"/><path d="M3 3.2V7.8M12.6 3.2V7.8" stroke="#3a3a3a" stroke-width="0.9"/>
<path d="M8.2 6.2 V11.6 A3.3 1.3 0 0 0 14.8 11.6 V6.2" fill="#fff" stroke="#e0652c" stroke-width="1"/>
<ellipse cx="11.5" cy="6.2" rx="3.3" ry="1.3" fill="#fff" stroke="#e0652c" stroke-width="1"/>
<path d="M8.2 8 A3.3 1.3 0 0 0 14.8 8 M8.2 9.8 A3.3 1.3 0 0 0 14.8 9.8" fill="none" stroke="#e0652c" stroke-width="0.9"/></svg>
<svg style="left:589.95px;top:110.50px;" width="6.500000000000114" height="4.099999999999994" viewBox="0 0 6.500000000000114 4.099999999999994"><path d="M1 1 L3.25 3.10 L5.50 1" fill="none" stroke="#3a3a3a" stroke-width="1.45" stroke-linecap="round" stroke-linejoin="round"/></svg>
<svg style="left:568.00px;top:128.50px;" width="16" height="16" viewBox="0 0 16 16"><path d="M0.8 4 H8.4 M3 1.7 L0.7 4 L3 6.3" fill="none" stroke="#2f74d0" stroke-width="1.1" stroke-linecap="round" stroke-linejoin="round"/>
<text x="9.9" y="6.3" font-family="Liberation Sans" font-size="8.2" fill="#444">0</text>
<text x="1.4" y="14.2" font-family="Liberation Sans" font-size="8.2" fill="#444">.00</text></svg>
<svg style="left:591.50px;top:128.50px;" width="14" height="16" viewBox="0 0 14 16"><text x="2.2" y="6.3" font-family="Liberation Sans" font-size="8.2" fill="#444">.00</text>
<path d="M0.8 11.4 H8.8 M6.5 9.1 L8.9 11.4 L6.5 13.7" fill="none" stroke="#2f74d0" stroke-width="1.1" stroke-linecap="round" stroke-linejoin="round"/></svg>
<svg style="left:14.00px;top:174.50px;" width="17" height="17" viewBox="0 0 17 17"><path d="M8.8 2.5 H14.8 V10.9 H6.9 L4.4 14.1 V10.9 H2.8 V7.9" fill="none" stroke="#444" stroke-width="1.15" stroke-linejoin="miter"/>
<path d="M4.4 1.3 V7.7 M1.3 4.4 H7.5" stroke="#2f9a5a" stroke-width="1.25"/></svg>
<span class="t" style="left:45.90px;top:176.36px;font-size:12.8px;color:#3a3a3a;font-weight:700;transform:scaleX(0.7784);">B</span>
<span class="t" style="left:71.60px;top:174.15px;font-size:14px;color:#4a4a4a;transform:scaleX(0.9953);">A</span>
<div style="left:68.80px;top:187.10px;width:15.10px;height:3.30px;background:#e81123;"></div>
<svg style="left:88.15px;top:180.10px;" width="5.900000000000006" height="3.9999999999999716" viewBox="0 0 5.900000000000006 3.9999999999999716"><path d="M1 1 L2.95 3.00 L4.90 1" fill="none" stroke="#3a3a3a" stroke-width="1.45" stroke-linecap="round" stroke-linejoin="round"/></svg>
<svg style="left:103.40px;top:175.30px;" width="17" height="16" viewBox="0 0 17 16"><path d="M7 1.5 H15.4 V14.1 H0.9 V7.2" fill="none" stroke="#444" stroke-width="1.15"/>
<rect x="7.6" y="1.5" width="7.8" height="2.5" fill="#777"/>
<path d="M3.4 1 V6.6 M0.6 3.8 H6.2" stroke="#2f9a5a" stroke-width="1.25"/></svg>
<svg style="left:129.60px;top:175.60px;" width="18" height="16" viewBox="0 0 18 16"><path d="M7.2 3.6 L1.4 7.2 L7.6 14.4 L13.2 9.4 Z" fill="#fdf1ea" stroke="#e8352e" stroke-width="1.15" stroke-linejoin="round"/>
<path d="M7.4 3.4 L1.4 7.2" stroke="#dfa06e" stroke-width="1.2" stroke-linecap="round"/>
<path d="M3.6 9 L5.6 8.6 L7 10.4 L9.2 10 L8.4 12.4" fill="none" stroke="#e8352e" stroke-width="0.9" opacity="0.85"/>
<path d="M7.6 3 L11.2 3.2 L12.6 4.4 L13.4 6 L13.7 9.2 Z" fill="#fff" stroke="#444" stroke-width="1.1" stroke-linejoin="round"/>
<path d="M12.5 4.4 L15.1 1.5" stroke="#444" stroke-width="3.5" stroke-linecap="round"/>
<path d="M12.4 4.5 L15.1 1.5" stroke="#fff" stroke-width="1.3" stroke-linecap="round"/></svg>
<div style="left:152px;top:168.2px;width:23.4px;height:25.8px;border:1px solid #b4b4b4;border-radius:4.5px;background:#e6e6e6;"></div>
<div style="left:158.30px;top:178.40px;width:13.20px;height:1.20px;background:#555;"></div>
<div style="left:158.30px;top:181.90px;width:13.20px;height:1.20px;background:#555;"></div>
<div style="left:158.30px;top:185.60px;width:13.20px;height:1.20px;background:#555;"></div>
<svg style="left:183.00px;top:174.50px;" width="17" height="17" viewBox="0 0 17 17"><path d="M1.5 11.6 V14.7 H15.6 V1.6 H13.6" fill="none" stroke="#444" stroke-width="1.15"/>
<path d="M7.6 12 H13" stroke="#777" stroke-width="1" stroke-dasharray="1.2 0.8"/>
<path d="M7.9 2.9 V7.2 A2.7 1.2 0 0 0 13.3 7.2 V2.9" fill="#f3f3f3" stroke="#8a8a8a" stroke-width="0.95"/>
<ellipse cx="10.6" cy="2.9" rx="2.7" ry="1.25" fill="#fafafa" stroke="#8a8a8a" stroke-width="0.95"/>
<path d="M4.4 1.8 L7.5 3.3 V8.6 L4.4 10.3 L1.3 8.6 V3.3 Z" fill="#e3edfc" stroke="#2f6fd0" stroke-width="1.15" stroke-linejoin="round"/>
<path d="M1.5 3.4 L4.4 5 L7.3 3.4 M4.4 5 V10" fill="none" stroke="#2f6fd0" stroke-width="1"/></svg>
<svg style="left:206.00px;top:175.50px;" width="17" height="16" viewBox="0 0 17 16"><rect x="1" y="1.2" width="14.8" height="12.5" fill="#fff" stroke="#444" stroke-width="1.15"/>
<path d="M1 3.3 H15.8" stroke="#444" stroke-width="0.9"/>
<path d="M3.4 4.6 H13.6 L7 12 H3.4 Z" fill="#6f9ce6"/>
<path d="M3.5 4.6 V12 M2.4 4.6 H4.6 M2.4 12 H4.6" stroke="#2f6fd0" stroke-width="1.1" fill="none"/>
<path d="M14.7 5 L7.4 12.5" stroke="#fff" stroke-width="3"/>
<path d="M14.7 5 L7.6 12.3" stroke="#555" stroke-width="1.5" stroke-linecap="round"/>
<path d="M4.2 11.4 Q5.4 13 7.6 12.4 L9.6 13.2 Q7.6 15.4 5.4 14.6 Q3.6 13.6 4.2 11.4 Z" fill="#2f6fd0"/></svg>
<svg style="left:227.65px;top:180.10px;" width="6.099999999999994" height="3.9999999999999716" viewBox="0 0 6.099999999999994 3.9999999999999716"><path d="M1 1 L3.05 3.00 L5.10 1" fill="none" stroke="#3a3a3a" stroke-width="1.45" stroke-linecap="round" stroke-linejoin="round"/></svg>
<svg style="left:245.00px;top:175.60px;" width="14" height="12" viewBox="0 0 14 12"><path d="M6.9 1.5 L10.7 6 L5.6 10.9 L1.2 6.7 Z" fill="#fff" stroke="#444" stroke-width="1.1" stroke-linejoin="round"/>
<path d="M4.9 3.2 Q5.4 0.7 7.3 0.9 Q8.6 1.2 8.3 3.4" fill="none" stroke="#444" stroke-width="0.9"/>
<path d="M10.9 4.6 Q12.9 6 12.1 9.4" fill="none" stroke="#2f74d0" stroke-width="1.5" stroke-linecap="round"/></svg>
<div style="left:244.40px;top:187.10px;width:14.60px;height:3.10px;background:#ffea00;"></div>
<svg style="left:263.85px;top:180.10px;" width="6.2999999999999545" height="3.9999999999999716" viewBox="0 0 6.2999999999999545 3.9999999999999716"><path d="M1 1 L3.15 3.00 L5.30 1" fill="none" stroke="#3a3a3a" stroke-width="1.45" stroke-linecap="round" stroke-linejoin="round"/></svg>
<div style="left:280.60px;top:177.30px;width:13.10px;height:11.60px;background:#5fa87a;"></div>
<div style="left:307.00px;top:176.47px;width:13.20px;height:1.25px;background:#5a5a5a;"></div>
<div style="left:308.95px;top:180.22px;width:9.30px;height:1.25px;background:#5a5a5a;"></div>
<div style="left:307.00px;top:183.97px;width:13.20px;height:1.25px;background:#5a5a5a;"></div>
<div style="left:308.95px;top:187.72px;width:9.30px;height:1.25px;background:#5a5a5a;"></div>
<svg style="left:334.00px;top:175.00px;" width="15" height="16" viewBox="0 0 15 16"><rect x="1.1" y="1" width="10.5" height="13.6" fill="#fff" stroke="#3b78d8" stroke-width="1"/>
<rect x="0.9" y="0.9" width="10.9" height="4.3" fill="#3b78d8"/>
<path d="M2.6 3.1 H10" stroke="#a9c5f3" stroke-width="1.1" stroke-dasharray="1.6 0.7"/>
<rect x="1.1" y="10.4" width="6.6" height="3.6" fill="#5b8fe2" stroke="#3b78d8" stroke-width="0.8"/>
<path d="M3 12.2 H6" stroke="#c4d7f6" stroke-width="0.9"/>
<path d="M8 9.8 L13.6 15 M13.6 9.8 L8 15" stroke="#e83a30" stroke-width="1.05"/></svg>
<svg style="left:363.40px;top:179.00px;" width="8" height="7.4" viewBox="0 0 8 7.4"><path d="M0.8 1 H7" stroke="#555" stroke-width="1.4"/><path d="M1 3.4 L3.8 6.2 L6.6 3.4" fill="none" stroke="#3a3a3a" stroke-width="1.3" stroke-linejoin="round"/></svg>
<svg style="left:87.45px;top:214.50px;" width="9.599999999999994" height="5.400000000000006" viewBox="0 0 9.599999999999994 5.400000000000006"><path d="M1 1 L4.80 4.40 L8.60 1" fill="none" stroke="#444" stroke-width="1.3" stroke-linecap="round" stroke-linejoin="round"/></svg>
<div style="left:110.40px;top:212.20px;width:2.00px;height:2.00px;background:#3f3f3f;border-radius:50%;"></div>
<div style="left:110.40px;top:215.70px;width:2.00px;height:2.00px;background:#3f3f3f;border-radius:50%;"></div>
<div style="left:110.40px;top:219.20px;width:2.00px;height:2.00px;background:#3f3f3f;border-radius:50%;"></div>
<svg style="left:125.50px;top:210.00px;" width="15" height="14" viewBox="0 0 15 14"><path d="M1.2 1.2 L13.4 12.6 M13.4 1.2 L1.2 12.6" stroke="#c4c4c4" stroke-width="1.2" fill="none"/></svg>
<svg style="left:146.50px;top:210.00px;" width="18" height="14" viewBox="0 0 18 14"><path d="M1.2 7.2 L5.8 12.2 L16.2 1.4" stroke="#c4c4c4" stroke-width="1.2" fill="none"/></svg>
<div style="left:276.40px;top:188.20px;width:20.4px;height:20.4px;border-radius:50%;background:#df3d3a;"></div>
<span class="t" style="left:282.30px;top:190.88px;font-size:15.5px;color:#fff;">1</span>
<div style="left:329.10px;top:189.10px;width:20.4px;height:20.4px;border-radius:50%;background:#df3d3a;"></div>
<span class="t" style="left:335.00px;top:191.78px;font-size:15.5px;color:#fff;">2</span>
<div style="left:365.20px;top:188.00px;width:20.4px;height:20.4px;border-radius:50%;background:#df3d3a;"></div>
<span class="t" style="left:371.10px;top:190.68px;font-size:15.5px;color:#fff;">3</span>
<div style="left:543.90px;top:109.60px;width:20.4px;height:20.4px;border-radius:50%;background:#df3d3a;"></div>
<span class="t" style="left:549.80px;top:112.28px;font-size:15.5px;color:#fff;">4</span>
<svg style="left:472.00px;top:68.00px;" width="104" height="68" viewBox="476 72 104 68"><path d="M519 81 C505 81.5 486 88 485.5 98.6 C485 108 508 114.8 532 114.4 C556 114 570 106 569.6 97 C569 87 552 80.6 520 81.6" fill="none" stroke="#e8090c" stroke-width="2.4" stroke-linecap="round"/>
<path d="M543 81.6 C558 83.6 568.6 89 569.5 96.6" fill="none" stroke="#e8090c" stroke-width="3.2" stroke-linecap="round"/>
<path d="M488 103.5 C496 111.5 518 115.2 534 114.8 C552 114.4 566 108.4 569.2 99.4" fill="none" stroke="#e8090c" stroke-width="4.2" stroke-linecap="round"/></svg>
</div></body></html>
